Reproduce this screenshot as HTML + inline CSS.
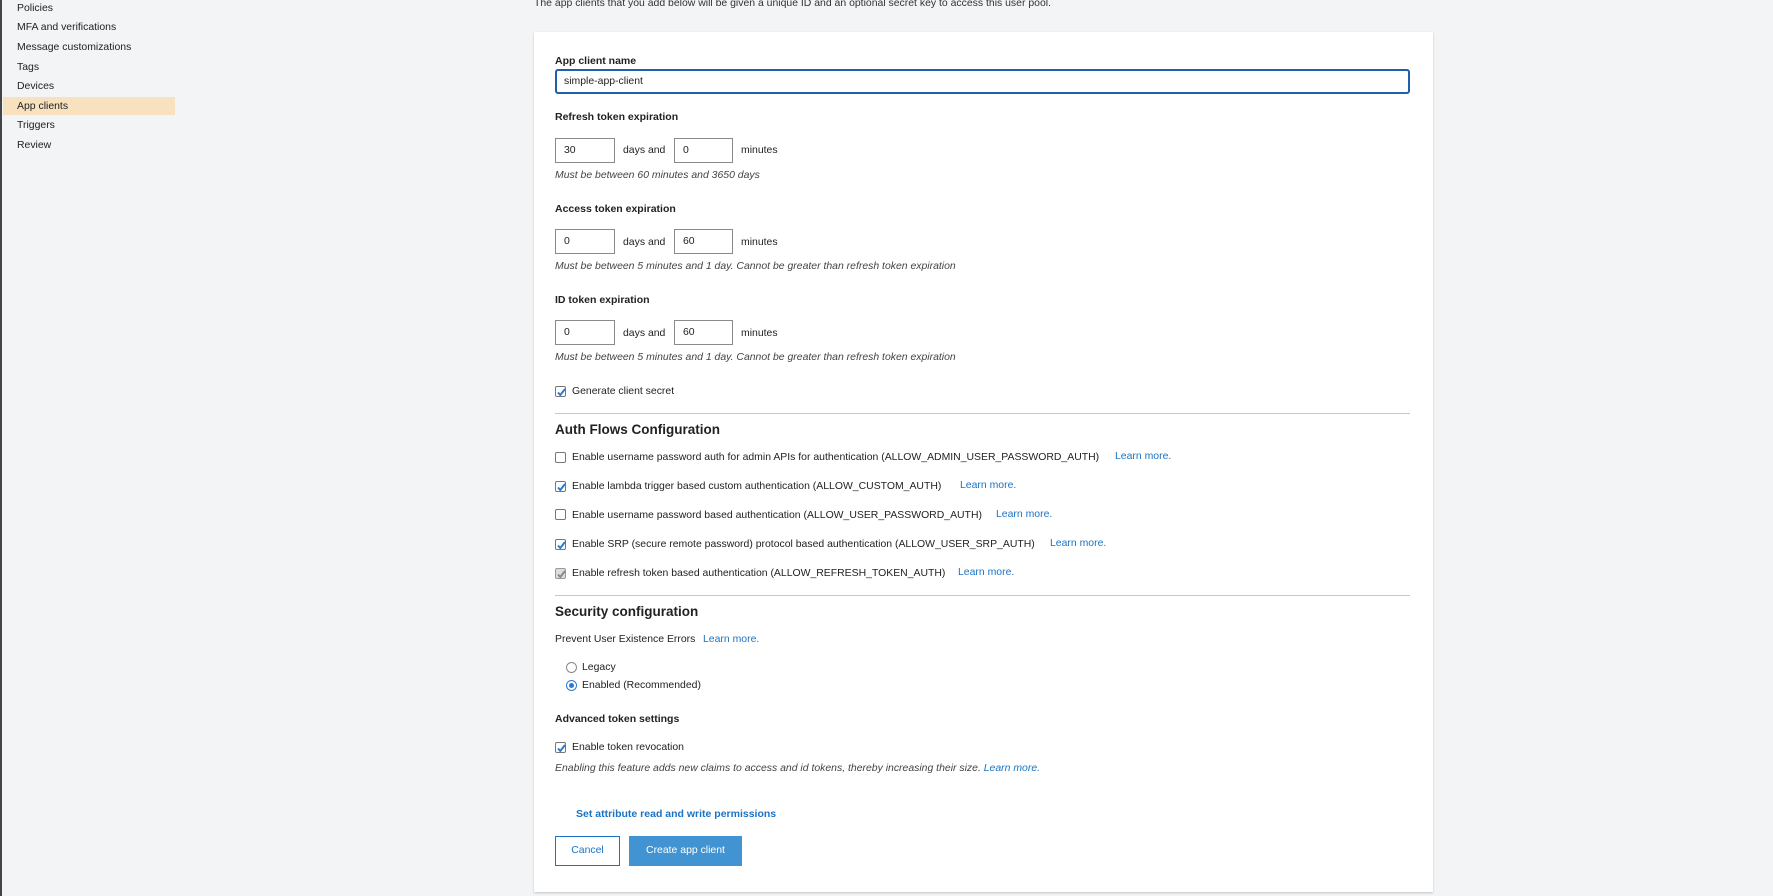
<!DOCTYPE html><html><head><meta charset="utf-8"><style>
body{margin:0;width:1773px;height:896px;background:#f2f4f5;font-family:"Liberation Sans",sans-serif;font-size:10.45px;color:#222;position:relative;overflow:hidden}
.a{position:absolute;line-height:16px;white-space:nowrap;margin-top:1px}
.b{font-weight:bold;font-size:10.5px}
.h{font-weight:bold;font-size:13.5px}
.i{font-style:italic;color:#444}
.l{color:#1a73c5}
.in{position:absolute;background:#fff;border:1px solid #8a8a8a;box-sizing:border-box;padding-left:8px;line-height:23px;font-size:10.45px}
.cb{position:absolute;width:11px;height:11px;border:1px solid #777;background:#fff;box-sizing:border-box;border-radius:2px}
.cb svg{position:absolute;left:0;top:0}
.hr{position:absolute;left:555px;width:855px;height:1px;background:#c8c8c8}
.rd{position:absolute;width:11px;height:11px;border:1px solid #888;border-radius:50%;box-sizing:border-box;background:#fff}
</style></head><body>
<div style="position:absolute;left:0;top:0;width:2px;height:896px;background:#444"></div>
<div style="position:absolute;left:3px;top:97px;width:172px;height:18px;background:#f7e1bf"></div>
<div class="a" style="left:17px;top:0">Policies</div>
<div class="a" style="left:17px;top:19px">MFA and verifications</div>
<div class="a" style="left:17px;top:39px">Message customizations</div>
<div class="a" style="left:17px;top:59px">Tags</div>
<div class="a" style="left:17px;top:78px">Devices</div>
<div class="a" style="left:17px;top:98px">App clients</div>
<div class="a" style="left:17px;top:117px">Triggers</div>
<div class="a" style="left:17px;top:137px">Review</div>
<div class="a" style="left:534px;top:-5px;color:#333">The app clients that you add below will be given a unique ID and an optional secret key to access this user pool.</div>
<div style="position:absolute;left:534px;top:32px;width:899px;height:860px;background:#fff;box-shadow:0 1px 2px rgba(0,0,0,.2)"></div>
<div class="a b" style="left:555px;top:52px">App client name</div>
<div class="in" style="left:555px;top:69px;width:855px;height:25px;border:2px solid #1f5fae;border-radius:3px;line-height:21px;padding-left:7px">simple-app-client</div>
<div class="a b" style="left:555px;top:108px">Refresh token expiration</div>
<div class="in" style="left:555px;top:138px;width:60px;height:25px">30</div><div class="a" style="left:623px;top:142px">days and</div><div class="in" style="left:674px;top:138px;width:59px;height:25px">0</div><div class="a" style="left:741px;top:142px">minutes</div>
<div class="a i" style="left:555px;top:167px">Must be between 60 minutes and 3650 days</div>
<div class="a b" style="left:555px;top:200px">Access token expiration</div>
<div class="in" style="left:555px;top:229px;width:60px;height:25px">0</div><div class="a" style="left:623px;top:234px">days and</div><div class="in" style="left:674px;top:229px;width:59px;height:25px">60</div><div class="a" style="left:741px;top:234px">minutes</div>
<div class="a i" style="left:555px;top:258px">Must be between 5 minutes and 1 day. Cannot be greater than refresh token expiration</div>
<div class="a b" style="left:555px;top:291px">ID token expiration</div>
<div class="in" style="left:555px;top:320px;width:60px;height:25px">0</div><div class="a" style="left:623px;top:325px">days and</div><div class="in" style="left:674px;top:320px;width:59px;height:25px">60</div><div class="a" style="left:741px;top:325px">minutes</div>
<div class="a i" style="left:555px;top:349px">Must be between 5 minutes and 1 day. Cannot be greater than refresh token expiration</div>
<div class="cb" style="left:555px;top:386px"><svg width="11" height="11"><path d="M2 5.5L4.3 8L9 2" stroke="#2a7bd0" stroke-width="2" fill="none"/></svg></div><div class="a" style="left:572px;top:383px">Generate client secret</div>
<div class="hr" style="top:413px"></div>
<div class="a h" style="left:555px;top:421px">Auth Flows Configuration</div>
<div class="cb" style="left:555px;top:452px"></div><div class="a" style="left:572px;top:449px">Enable username password auth for admin APIs for authentication (ALLOW_ADMIN_USER_PASSWORD_AUTH)</div><div class="a l" style="left:1115px;top:448px">Learn more.</div>
<div class="cb" style="left:555px;top:481px"><svg width="11" height="11"><path d="M2 5.5L4.3 8L9 2" stroke="#2a7bd0" stroke-width="2" fill="none"/></svg></div><div class="a" style="left:572px;top:478px">Enable lambda trigger based custom authentication (ALLOW_CUSTOM_AUTH)</div><div class="a l" style="left:960px;top:477px">Learn more.</div>
<div class="cb" style="left:555px;top:509px"></div><div class="a" style="left:572px;top:507px">Enable username password based authentication (ALLOW_USER_PASSWORD_AUTH)</div><div class="a l" style="left:996px;top:506px">Learn more.</div>
<div class="cb" style="left:555px;top:539px"><svg width="11" height="11"><path d="M2 5.5L4.3 8L9 2" stroke="#2a7bd0" stroke-width="2" fill="none"/></svg></div><div class="a" style="left:572px;top:536px">Enable SRP (secure remote password) protocol based authentication (ALLOW_USER_SRP_AUTH)</div><div class="a l" style="left:1050px;top:535px">Learn more.</div>
<div class="cb" style="left:555px;top:568px;background:#ddd;border-color:#999"><svg width="11" height="11"><path d="M2 5.5L4.3 8L9 2" stroke="#888" stroke-width="2" fill="none"/></svg></div><div class="a" style="left:572px;top:565px">Enable refresh token based authentication (ALLOW_REFRESH_TOKEN_AUTH)</div><div class="a l" style="left:958px;top:564px">Learn more.</div>
<div class="hr" style="top:595px"></div>
<div class="a h" style="left:555px;top:603px">Security configuration</div>
<div class="a" style="left:555px;top:631px">Prevent User Existence Errors</div><div class="a l" style="left:703px;top:631px">Learn more.</div>
<div class="rd" style="left:566px;top:662px"></div><div class="a" style="left:582px;top:659px">Legacy</div>
<div class="rd" style="left:566px;top:680px;border-color:#2a7bd0"><div style="position:absolute;left:2px;top:2px;width:5px;height:5px;border-radius:50%;background:#2a7bd0"></div></div><div class="a" style="left:582px;top:677px">Enabled (Recommended)</div>
<div class="a b" style="left:555px;top:710px">Advanced token settings</div>
<div class="cb" style="left:555px;top:742px"><svg width="11" height="11"><path d="M2 5.5L4.3 8L9 2" stroke="#2a7bd0" stroke-width="2" fill="none"/></svg></div><div class="a" style="left:572px;top:739px">Enable token revocation</div>
<div class="a i" style="left:555px;top:760px">Enabling this feature adds new claims to access and id tokens, thereby increasing their size. <span class="l">Learn more.</span></div>
<div class="a b l" style="left:576px;top:805px">Set attribute read and write permissions</div>
<div style="position:absolute;left:555px;top:836px;width:65px;height:30px;border:1px solid #1a73c5;box-sizing:border-box;background:#fff;color:#1a73c5;text-align:center;line-height:28px">Cancel</div>
<div style="position:absolute;left:629px;top:836px;width:113px;height:30px;background:#4193d2;color:#fff;text-align:center;line-height:30px">Create app client</div>
</body></html>
